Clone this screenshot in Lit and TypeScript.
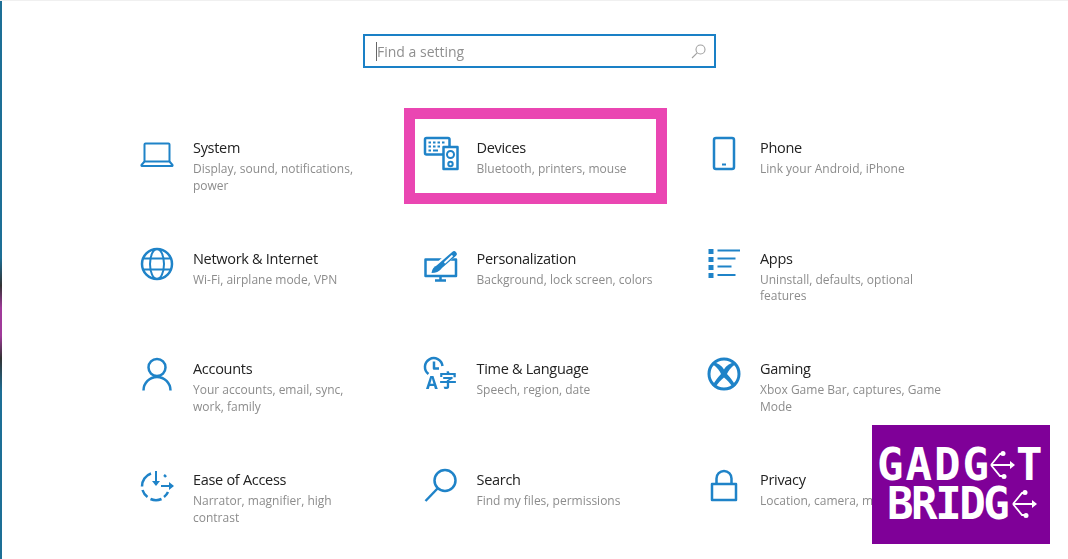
import { LitElement, html, css, svg } from "lit";
import { customElement } from "lit/decorators.js";

const icons: Record<string, unknown> = {
  system: svg`<rect x="4.5" y="6.5" width="25" height="18" rx="1" class="s2"/><path d="M4.5 24.5 L1.500 28 Q1 29 2.500 29 H31.500 Q33 29 32.500 28 L29.500 24.500" class="s2"/>`,
  devices: svg`<path d="M19 17.500H2.500a1.500 1.500 0 0 1-1.500-1.500V2.500a1.500 1.500 0 0 1 1.500-1.500h21.500a1.500 1.500 0 0 1 1.500 1.500V9" class="s25"/>
    <path d="M4.500 5.500h2.500M9 5.500h2.500M13.500 5.500h2.500M18 5.500h2.500M4.500 9.500h2.500M9 9.500h2.500M13.500 9.500h2.500M4.500 13.500h2.500M9 13.500h5" class="s2"/>
    <rect x="19.500" y="10" width="14" height="22" class="w2"/><circle cx="26.500" cy="17.500" r="3.500" class="s2"/><circle cx="26.500" cy="27" r="2.200" class="s2"/>`,
  phone: svg`<rect x="7" y="1" width="20" height="31" rx="2" class="s25"/><path d="M15 27.500h4" class="s2"/>`,
  network: svg`<circle cx="17" cy="16" r="15" class="s25"/><ellipse cx="17" cy="16" rx="7" ry="15" class="s2"/><path d="M3.500 10.500H30.500M3.500 21.500H30.500" class="s2"/>`,
  personal: svg`<path d="M1.500 11.500H32V28H1.500Z" class="s25"/><path d="M11 32.500h11M16.500 28v4" class="s25"/><path d="M31 3 L11 22" class="wide"/><path d="M30 6 L15 19" class="brush"/><path d="M28 8 L21 14.500" class="core"/><path d="M14 17 Q8 19 7.500 25 Q14 25 17.500 20.500Z" class="f"/>`,
  apps: svg`<rect x="1.500" y="1" width="5" height="5" class="f"/><rect x="1.500" y="9" width="5" height="5" class="f"/><rect x="1.500" y="17" width="5" height="5" class="f"/><rect x="1.500" y="25" width="5" height="5" class="f"/><path d="M10.500 2.500h22.500M10.500 10.500h18M10.500 18.500h14M10.500 27h18" class="s2"/>`,
  accounts: svg`<circle cx="17" cy="9.500" r="8.500" class="s25"/><path d="M3.500 32.500a13.500 13.500 0 0 1 27 0" class="s25"/>`,
  time: svg`<path d="M4.500 16a8.800 8.800 0 1 1 14-8" class="s25"/><path d="M10 3.500v7h5" class="s25"/><text x="2" y="31" class="ta">A</text><text x="15" y="29" class="tz">字</text>`,
  gaming: svg`<circle cx="17" cy="16" r="15" class="s3"/><path d="M8 4.500 C13 6 15.500 9 17 11.500 C18.500 9 21 6 26 4.500 L28 6.500 C24 9.500 21 13 20 16 C23 19 26 23 28.500 27.500 L26 29.500 C23 25 20 22 17 19.500 C14 22 11 25 8 29.500 L5.500 27.500 C8 23 11 19 14 16 C13 13 10 9.500 6 6.500 Z" class="f"/>`,
  ease: svg`<path d="M11 4.500a13.500 13.500 0 0 0-9 13M2.500 21a13.500 13.500 0 0 0 5 7M10.500 30a13.500 13.500 0 0 0 11 0M24 28a13.500 13.500 0 0 0 4-5M24 6a13.500 13.500 0 0 1 2 2" class="s25"/><path d="M16 2v14" class="s2"/><path d="M12 12l4 5 4-5z" class="f"/><path d="M21 17h12" class="s2"/><path d="M29 13l5 4-5 4z" class="f"/>`,
  search: svg`<circle cx="21" cy="11.500" r="10.500" class="s25"/><path d="M13.500 19.500 L1.500 32" class="s25"/>`,
  privacy: svg`<rect x="5" y="15" width="24" height="16" class="s25"/><path d="M9.500 15V9.500a7.500 7.500 0 0 1 15 0V15" class="s25"/>`,
};

const items = [
  ["system", "System", "Display, sound, notifications, power"],
  ["devices", "Devices", "Bluetooth, printers, mouse"],
  ["phone", "Phone", "Link your Android, iPhone"],
  ["network", "Network & Internet", "Wi-Fi, airplane mode, VPN"],
  ["personal", "Personalization", "Background, lock screen, colors"],
  ["apps", "Apps", "Uninstall, defaults, optional features"],
  ["accounts", "Accounts", "Your accounts, email, sync, work, family"],
  ["time", "Time & Language", "Speech, region, date"],
  ["gaming", "Gaming", "Xbox Game Bar, captures, Game Mode"],
  ["ease", "Ease of Access", "Narrator, magnifier, high contrast"],
  ["search", "Search", "Find my files, permissions"],
  ["privacy", "Privacy", "Location, camera, microphone"],
];

const usb = svg`<svg class="usb" viewBox="0 0 26 32" width="26" height="32"><path d="M1 16H24M1 16L10 5H13M1 16L10 27H14" fill="none" stroke="#fff" stroke-width="1.800"/><path d="M20 12l5 4-5 4z" fill="#fff"/><circle cx="13" cy="4.500" r="2.500" fill="#fff"/><circle cx="14" cy="27.500" r="2.500" fill="#fff"/></svg>`;

@customElement("app-root")
export class AppRoot extends LitElement {
  static styles = css`
    :host { display: block; width: 1068px; height: 559px; position: relative; overflow: hidden; background: #fff; font-family: "Open Sans", "Noto Sans", sans-serif; }
    .page { display: flex; height: 559px; border-top: 1px solid #f0f0f0; box-sizing: border-box; }
    .stripe { width: 2px; flex: none; background: linear-gradient(#1d6f96 0 46%, #333 51%, #a03a9a 55%, #a03a9a 60%, #333 64%, #1d6f96 70%); }
    .main { flex: 1; padding: 33px 0 0 138px; filter: blur(0.35px); }
    .searchwrap { padding-left: 223px; }
    .search { width: 353px; height: 34px; box-sizing: border-box; border: 2.500px solid #1a80c6; display: flex; align-items: center; padding: 0 8px 0 11px; color: #8f8f8f; font-size: 14px; }
    .caret { width: 1px; height: 19px; background: #666; }
    .ph { flex: 1; }
    .mag { width: 15px; height: 15px; }
    .grid { display: grid; grid-template-columns: repeat(3, 283.500px); grid-auto-rows: 110.700px; margin-top: 69px; }
    .cell { display: flex; gap: 19px; position: relative; }
    .ic { width: 34px; height: 34px; flex: none; overflow: visible; }
    .text { width: 182px; }
    .t { font-size: 14.500px; line-height: 20px; color: #222; margin-top: 1px; letter-spacing: -0.300px; }
    .d { font-size: 12px; line-height: 16.700px; color: #8c8c8c; margin-top: 3px; }
    .hl { position: absolute; left: -20px; top: -29px; width: 263px; height: 96px; box-sizing: border-box; border: 11px solid #ea46b2; pointer-events: none; }
    .logo { position: absolute; left: 872px; top: 425px; width: 178px; height: 119px; background: #7f0098; color: #fff; font-family: "DejaVu Sans Mono", monospace; font-weight: 700; font-size: 44px; line-height: 39px; display: flex; flex-direction: column; padding-top: 20px; box-sizing: border-box; }
    .l { display: flex; align-items: center; height: 39px; }
    .l1 { padding-left: 5px; letter-spacing: 2px; }
    .l2 { padding-left: 15px; letter-spacing: -2.400px; }
    .l1 .usb { margin-left: -1px; }
    .l2 .usb { margin-left: 5px; }
    .s2, .s25, .s3, .w2 { fill: none; stroke: #1f83c8; stroke-linejoin: round; }
    .s2 { stroke-width: 2; } .s25 { stroke-width: 2.500; } .s3 { stroke-width: 3; }
    .w2 { stroke-width: 2.500; fill: #fff; }
    .f { fill: #1f83c8; }
    .wide { stroke: #fff; stroke-width: 8; fill: none; }
    .brush { stroke: #1f83c8; stroke-width: 5.500; stroke-linecap: round; fill: none; }
    .core { stroke: #fff; stroke-width: 1.800; stroke-linecap: round; fill: none; }
    .ta { font: 700 17px "Open Sans", sans-serif; fill: #1f83c8; }
    .tz { font: 700 18px "Noto Sans CJK SC", sans-serif; fill: #1f83c8; }
    .usb { flex: none; }
  `;
  render() {
    return html`<div class="page">
      <div class="stripe"></div>
      <div class="main">
        <div class="searchwrap"><div class="search"><span class="caret"></span><span class="ph">Find a setting</span>
          <svg class="mag" viewBox="0 0 15 15"><circle cx="9.500" cy="5.500" r="4.500" fill="none" stroke="#a0a0a0" stroke-width="1.100"/><path d="M6.200 8.800L1 14" stroke="#a0a0a0" stroke-width="1.100"/></svg></div></div>
        <div class="grid">
          ${items.map(([k, t, d]) => html`<div class="cell">
            <svg class="ic" viewBox="0 0 34 34">${icons[k]}</svg>
            <div class="text"><div class="t">${t}</div><div class="d">${d}</div></div>
            ${k === "devices" ? html`<div class="hl"></div>` : null}
          </div>`)}
        </div>
      </div>
    </div>
    <div class="logo"><div class="l l1"><span>GADG</span>${usb}<span>T</span></div><div class="l l2"><span>BRIDG</span>${usb}</div></div>`;
  }
}
